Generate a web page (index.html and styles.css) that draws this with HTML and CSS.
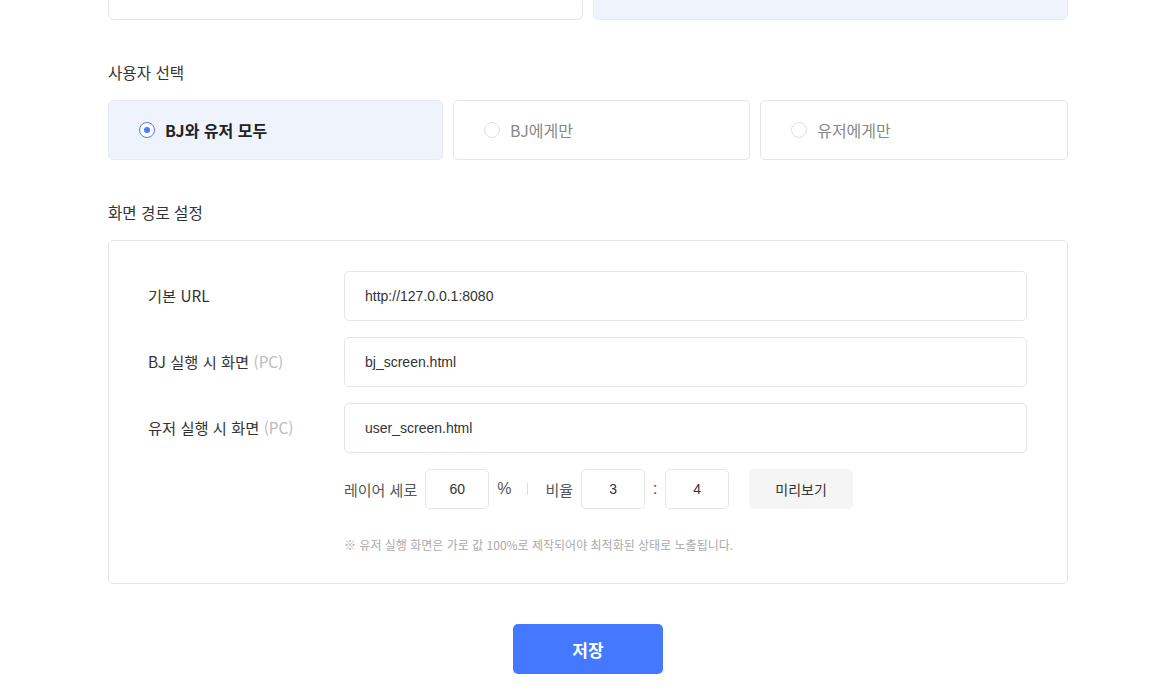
FILE: index.html
```html
<!DOCTYPE html>
<html lang="ko">
<head>
<meta charset="utf-8">
<link rel="stylesheet" href="styles.css">
</head>
<body>
<div class="page">
  <div class="top-row">
    <div class="top-box"></div>
    <div class="top-box active"></div>
  </div>

  <h3 class="sec-title">사용자 선택</h3>
  <div class="radio-row">
    <label class="radio-box selected"><span class="radio"></span><span class="radio-text">BJ와 유저 모두</span></label>
    <label class="radio-box"><span class="radio"></span><span class="radio-text">BJ에게만</span></label>
    <label class="radio-box"><span class="radio"></span><span class="radio-text">유저에게만</span></label>
  </div>

  <h3 class="sec-title">화면 경로 설정</h3>
  <div class="panel">
    <div class="form-row">
      <div class="label">기본 URL</div>
      <div class="field">http://127.0.0.1:8080</div>
    </div>
    <div class="form-row">
      <div class="label">BJ 실행 시 화면 <span class="sub">(PC)</span></div>
      <div class="field">bj_screen.html</div>
    </div>
    <div class="form-row">
      <div class="label">유저 실행 시 화면 <span class="sub">(PC)</span></div>
      <div class="field">user_screen.html</div>
    </div>
    <div class="layer-row">
      <span class="ltxt">레이어 세로</span>
      <span class="small-input">60</span>
      <span class="pct">%</span>
      <span class="divider"></span>
      <span class="ltxt">비율</span>
      <span class="small-input">3</span>
      <span class="colon">:</span>
      <span class="small-input">4</span>
      <span class="preview-btn">미리보기</span>
    </div>
    <p class="note">※ 유저 실행 화면은 가로 값 100%로 제작되어야 최적화된 상태로 노출됩니다.</p>
  </div>

  <div class="save-wrap">
    <button class="save-btn">저장</button>
  </div>
</div>
</body>
</html>
```

FILE: styles.css
```css
* { box-sizing: border-box; }
html, body { margin: 0; padding: 0; background: #fff; }
body {
  font-family: "Noto Sans CJK KR", "Noto Sans", sans-serif;
  color: #333;
  overflow: hidden;
}
.page {
  width: 960px;
  margin-left: 108px;
}
.top-row {
  display: flex;
  gap: 10px;
  margin-top: -20px;
  height: 40px;
}
.top-box {
  flex: 1;
  border: 1px solid #e6e6e6;
  border-radius: 0 0 6px 6px;
  background: #fff;
}
.top-box.active {
  background: #eef3fc;
  border-color: #e6ebf5;
}
.sec-title {
  margin: 41px 0 17px;
  font-size: 15.6px;
  line-height: 22px;
  font-weight: 400;
  color: #333;
}
.radio-row {
  display: flex;
  gap: 10px;
  height: 60px;
}
.radio-box {
  flex: 1 1 auto;
  display: flex;
  align-items: center;
  gap: 10px;
  padding: 0 30px;
  border: 1px solid #e6e6e6;
  border-radius: 5px;
  background: #fff;
}
.radio-box.selected {
  flex-basis: 335px;
  flex-grow: 0;
  background: #eef3fc;
  border-color: #e6ebf5;
}
.radio {
  width: 16px;
  height: 16px;
  border: 1px solid #e0e0e0;
  border-radius: 50%;
  background: #fff;
  flex: none;
  display: flex;
  align-items: center;
  justify-content: center;
}
.selected .radio { border-color: #4a7cff; }
.selected .radio::after {
  content: "";
  width: 6px;
  height: 6px;
  border-radius: 50%;
  background: #4a7cff;
}
.radio-text {
  font-size: 16px;
  line-height: 22px;
  color: #888;
}
.selected .radio-text { color: #222; font-weight: 700; }
.panel {
  border: 1px solid #e6e6e6;
  border-radius: 5px;
  padding: 30px 40px 29px 39px;
  display: flex;
  flex-direction: column;
  gap: 16px;
}
.form-row {
  display: flex;
  align-items: center;
}
.label {
  width: 196px;
  flex: none;
  font-size: 15.3px;
  line-height: 22px;
  color: #333;
  align-self: flex-start;
  padding-top: 13px;
}
.label .sub { color: #bbb; }
.field {
  flex: 1;
  height: 50px;
  border: 1px solid #e6e6e6;
  border-radius: 5px;
  padding: 0 20px;
  display: flex;
  align-items: center;
  font-family: "Liberation Sans", Arial, sans-serif;
  font-size: 14px;
  color: #333;
}
.layer-row {
  display: flex;
  align-items: center;
  margin-left: 196px;
  height: 40px;
  font-size: 15px;
  color: #555;
}
.ltxt { margin-right: 8px; }
.small-input {
  width: 64px;
  height: 40px;
  border: 1px solid #e6e6e6;
  border-radius: 5px;
  display: flex;
  align-items: center;
  justify-content: center;
  font-family: "Liberation Sans", Arial, sans-serif;
  font-size: 14px;
  color: #333;
}
.pct {
  margin-left: 8px;
  font-family: "Liberation Sans", Arial, sans-serif;
  font-size: 16px;
  color: #555;
}
.divider {
  width: 1px;
  height: 12px;
  background: #ddd;
  margin: 0 17px 0 16px;
}
.colon {
  width: 20px;
  text-align: center;
  font-family: "Liberation Sans", Arial, sans-serif;
  font-size: 17px;
  color: #555;
}
.preview-btn {
  margin-left: 20px;
  width: 104px;
  height: 40px;
  border-radius: 5px;
  background: #f5f5f5;
  display: flex;
  align-items: center;
  justify-content: center;
  font-size: 14px;
  color: #333;
}
.note {
  margin: 11px 0 0 196px;
  font-size: 12px;
  line-height: 18px;
  color: #aaa;
}
.save-wrap {
  display: flex;
  justify-content: center;
  margin-top: 40px;
}
.save-btn {
  width: 150px;
  height: 50px;
  border: 0;
  border-radius: 5px;
  background: #4479ff;
  color: #fff;
  font-family: "Noto Sans CJK KR", sans-serif;
  font-size: 17px;
  font-weight: 700;
}
```
